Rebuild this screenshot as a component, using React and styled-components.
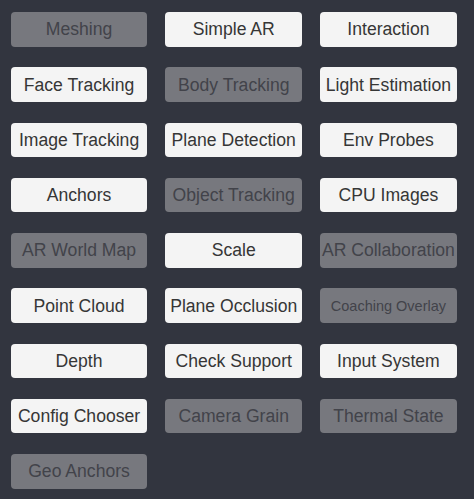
import React from 'react';
import styled, { createGlobalStyle } from 'styled-components';

const GlobalStyle = createGlobalStyle`
  html, body {
    margin: 0;
    padding: 0;
    background: #32353f;
  }
  body {
    font-family: "Liberation Sans", Arial, sans-serif;
  }
`;

const Menu = styled.div`
  display: grid;
  grid-template-columns: repeat(3, 136.7px);
  grid-auto-rows: 34.5px;
  column-gap: 18px;
  row-gap: 20.75px;
  padding: 12px 0 0 10.7px;
  min-height: 499px;
  box-sizing: border-box;
  background: #32353f;
`;

const SceneButton = styled.button`
  display: flex;
  align-items: center;
  justify-content: center;
  margin: 0;
  padding: 1px 0 0;
  border: none;
  border-radius: 4px;
  font-family: "Liberation Sans", Arial, sans-serif;
  font-size: ${(p) => (p.$small ? '14.5px' : '17.6px')};
  white-space: nowrap;
  overflow: visible;
  background: ${(p) => (p.$disabled ? '#77787e' : '#f4f4f4')};
  color: ${(p) => (p.$disabled ? '#42434a' : '#363636')};
`;

const scenes = [
  { label: 'Meshing', disabled: true },
  { label: 'Simple AR' },
  { label: 'Interaction' },
  { label: 'Face Tracking' },
  { label: 'Body Tracking', disabled: true },
  { label: 'Light Estimation' },
  { label: 'Image Tracking' },
  { label: 'Plane Detection' },
  { label: 'Env Probes' },
  { label: 'Anchors' },
  { label: 'Object Tracking', disabled: true },
  { label: 'CPU Images' },
  { label: 'AR World Map', disabled: true },
  { label: 'Scale' },
  { label: 'AR Collaboration', disabled: true },
  { label: 'Point Cloud' },
  { label: 'Plane Occlusion' },
  { label: 'Coaching Overlay', disabled: true, small: true },
  { label: 'Depth' },
  { label: 'Check Support' },
  { label: 'Input System' },
  { label: 'Config Chooser' },
  { label: 'Camera Grain', disabled: true },
  { label: 'Thermal State', disabled: true },
  { label: 'Geo Anchors', disabled: true },
];

export default function App() {
  return (
    <>
      <GlobalStyle />
      <Menu>
        {scenes.map((s) => (
          <SceneButton key={s.label} $disabled={s.disabled} $small={s.small}>
            {s.label}
          </SceneButton>
        ))}
      </Menu>
    </>
  );
}
